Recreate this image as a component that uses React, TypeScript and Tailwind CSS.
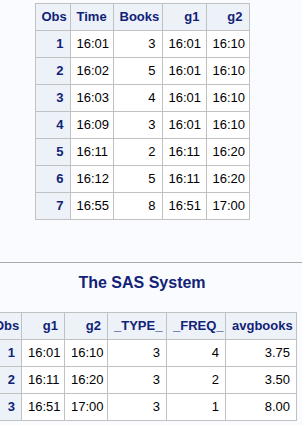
import React from 'react'

const groups = [
  { obs: 1, time: '16:01', books: 3, g1: '16:01', g2: '16:10' },
  { obs: 2, time: '16:02', books: 5, g1: '16:01', g2: '16:10' },
  { obs: 3, time: '16:03', books: 4, g1: '16:01', g2: '16:10' },
  { obs: 4, time: '16:09', books: 3, g1: '16:01', g2: '16:10' },
  { obs: 5, time: '16:11', books: 2, g1: '16:11', g2: '16:20' },
  { obs: 6, time: '16:12', books: 5, g1: '16:11', g2: '16:20' },
  { obs: 7, time: '16:55', books: 8, g1: '16:51', g2: '17:00' },
]

const summary = [
  { obs: 1, g1: '16:01', g2: '16:10', type: 3, freq: 4, avg: '3.75' },
  { obs: 2, g1: '16:11', g2: '16:20', type: 3, freq: 2, avg: '3.50' },
  { obs: 3, g1: '16:51', g2: '17:00', type: 3, freq: 1, avg: '8.00' },
]

const th = 'border border-[#c1c1c1] bg-[#edf2f9] text-[#112277] font-bold px-[6px] py-0 leading-[26px] text-right whitespace-nowrap'
const td = 'border border-[#c1c1c1] bg-white text-black px-[6px] py-0 leading-[26px] text-right whitespace-nowrap'

function TimesTable() {
  return (
    <table className="border-collapse table-fixed w-[214px] text-[13px]">
      <colgroup>
        <col className="w-[35px]" />
        <col className="w-[43px]" />
        <col className="w-[49px]" />
        <col className="w-[44px]" />
        <col className="w-[43px]" />
      </colgroup>
      <thead>
        <tr>
          <th className={th}>Obs</th>
          <th className={th}>Time</th>
          <th className={th}>Books</th>
          <th className={th}>g1</th>
          <th className={th}>g2</th>
        </tr>
      </thead>
      <tbody>
        {groups.map((r) => (
          <tr key={r.obs}>
            <th className={th}>{r.obs}</th>
            <td className={td}>{r.time}</td>
            <td className={td}>{r.books}</td>
            <td className={td}>{r.g1}</td>
            <td className={td}>{r.g2}</td>
          </tr>
        ))}
      </tbody>
    </table>
  )
}

function SummaryTable() {
  return (
    <table className="border-collapse table-fixed w-[309px] shrink-0 text-[13px]">
      <colgroup>
        <col className="w-[34px]" />
        <col className="w-[43px]" />
        <col className="w-[43px]" />
        <col className="w-[59px]" />
        <col className="w-[59px]" />
        <col className="w-[71px]" />
      </colgroup>
      <thead>
        <tr>
          <th className={th}>Obs</th>
          <th className={th}>g1</th>
          <th className={th}>g2</th>
          <th className={th}>_TYPE_</th>
          <th className={th}>_FREQ_</th>
          <th className={th}>avgbooks</th>
        </tr>
      </thead>
      <tbody>
        {summary.map((r) => (
          <tr key={r.obs}>
            <th className={th}>{r.obs}</th>
            <td className={td}>{r.g1}</td>
            <td className={td}>{r.g2}</td>
            <td className={td}>{r.type}</td>
            <td className={td}>{r.freq}</td>
            <td className={td}>{r.avg}</td>
          </tr>
        ))}
      </tbody>
    </table>
  )
}

export default function App() {
  return (
    <div className="w-[302px] h-[425px] overflow-hidden bg-[#fafbfe] flex flex-col font-['Liberation_Sans',Arial,sans-serif]">
      <div className="w-[284px] pt-[3px] flex justify-center">
        <TimesTable />
      </div>

      <div className="mt-[42px] h-px w-full bg-[#a8a8a8]" />

      <div className="w-[284px] flex flex-col items-center">
        <h1 className="pt-[10px] pb-[19px] text-[16px] leading-[20px] font-bold text-[#112277]">
          The SAS System
        </h1>
        <div className="w-[284px] flex justify-center">
          <SummaryTable />
        </div>
      </div>
    </div>
  )
}
